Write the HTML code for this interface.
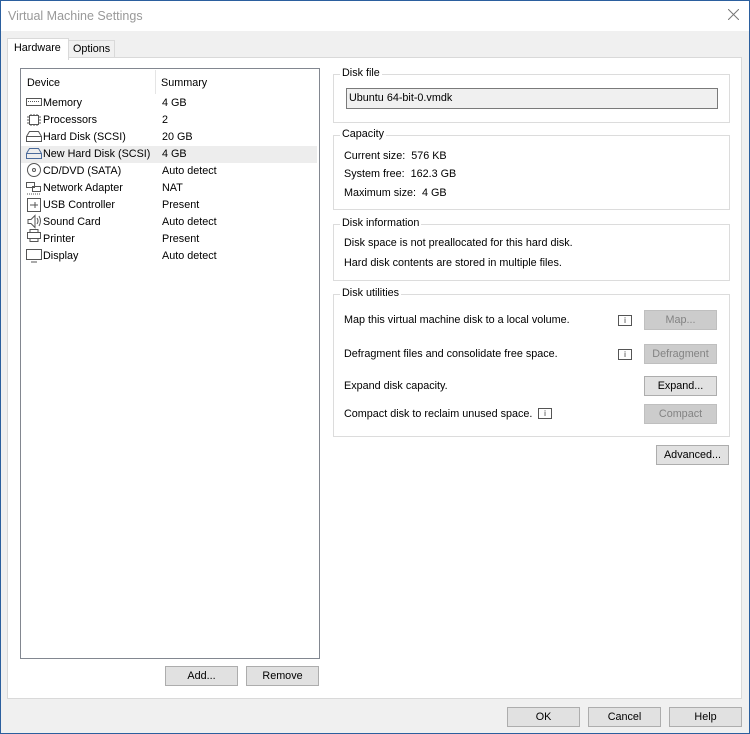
<!DOCTYPE html>
<html><head><style>
body{margin:0;width:750px;height:734px;overflow:hidden;font-family:"Liberation Sans",sans-serif;font-size:10.8px;color:#000;}
.win{position:absolute;left:0;top:0;width:748px;height:732px;border:1px solid #2b5f9e;background:#f0f0f0;}
.title{position:absolute;left:0;top:0;width:748px;height:30px;background:#fff;}
.a{position:absolute;white-space:nowrap;}
.btn{position:absolute;border:1px solid #adadad;background:#e1e1e1;text-align:center;line-height:18px;height:18px;box-sizing:content-box;}
.dis{color:#838383;border-color:#bfbfbf;background:#cccccc;}
.grp{position:absolute;border:1px solid #dcdcdc;}
.lg{position:absolute;top:-8px;left:6px;background:#fff;padding:0 2px;}
.info{position:absolute;width:12px;height:9px;border:1px solid #555;font-size:8px;line-height:9px;text-align:center;color:#333;}
</style></head><body>
<div class="win">
<div class="title"><span class="a" style="left:7px;top:8px;font-size:12.5px;color:#999">Virtual Machine Settings</span>
<svg class="a" style="left:727px;top:8px" width="11" height="11" stroke="#777" stroke-width="1"><path d="M0 0L11 11M11 0L0 11"/></svg></div>
<div class="a" style="left:66px;top:39px;width:46px;height:18px;border:1px solid #d9d9d9;border-bottom:none;background:#f0f0f0"></div>
<span class="a" style="left:72px;top:42px">Options</span>
<div class="a" style="left:6px;top:56px;width:733px;height:640px;border:1px solid #d9d9d9;background:#fff"></div>
<div class="a" style="left:6px;top:37px;width:60px;height:21px;border:1px solid #d9d9d9;border-bottom:none;background:#fff"></div>
<span class="a" style="left:13px;top:41px">Hardware</span>
<div class="a" style="left:19px;top:67px;width:298px;height:589px;border:1px solid #828790;background:#fff"></div>
<div class="a" style="left:154px;top:69px;width:1px;height:24px;background:#e5e5e5"></div>
<span class="a" style="left:26px;top:76px">Device</span><span class="a" style="left:160px;top:76px">Summary</span>
<div class="a" style="left:20px;top:145px;width:296px;height:17px;background:#ededed"></div>
<div class="grp" style="left:332px;top:73px;width:395px;height:47px"><span class="lg">Disk file</span>
<div class="a" style="left:12px;top:13px;width:368px;height:19px;border:1px solid #7a7a7a;background:#f0f0f0;line-height:19px;padding-left:2px">Ubuntu 64-bit-0.vmdk</div></div>
<div class="grp" style="left:332px;top:134px;width:395px;height:73px"><span class="lg">Capacity</span>
<span class="a" style="left:10px;top:14px">Current size:&nbsp; 576 KB</span>
<span class="a" style="left:10px;top:32px">System free:&nbsp; 162.3 GB</span>
<span class="a" style="left:10px;top:51px">Maximum size:&nbsp; 4 GB</span></div>
<div class="grp" style="left:332px;top:223px;width:395px;height:55px"><span class="lg">Disk information</span>
<span class="a" style="left:10px;top:12px">Disk space is not preallocated for this hard disk.</span>
<span class="a" style="left:10px;top:32px">Hard disk contents are stored in multiple files.</span></div>
<div class="grp" style="left:332px;top:293px;width:395px;height:141px"><span class="lg">Disk utilities</span>
<span class="a" style="left:10px;top:19px">Map this virtual machine disk to a local volume.</span>
<span class="a" style="left:10px;top:53px">Defragment files and consolidate free space.</span>
<span class="a" style="left:10px;top:85px">Expand disk capacity.</span>
<span class="a" style="left:10px;top:113px">Compact disk to reclaim unused space.</span>
<div class="info" style="left:284px;top:20px">i</div>
<div class="info" style="left:284px;top:54px">i</div>
<div class="info" style="left:204px;top:113px">i</div>
<div class="btn dis" style="left:310px;top:15px;width:71px">Map...</div>
<div class="btn dis" style="left:310px;top:49px;width:71px">Defragment</div>
<div class="btn" style="left:310px;top:81px;width:71px">Expand...</div>
<div class="btn dis" style="left:310px;top:109px;width:71px">Compact</div>
</div>
<div class="btn" style="left:655px;top:444px;width:71px">Advanced...</div>
<div class="btn" style="left:164px;top:665px;width:71px">Add...</div>
<div class="btn" style="left:245px;top:665px;width:71px">Remove</div>
<div class="btn" style="left:506px;top:706px;width:71px">OK</div>
<div class="btn" style="left:587px;top:706px;width:71px">Cancel</div>
<div class="btn" style="left:668px;top:706px;width:71px">Help</div>
</div>
<div style="position:absolute;left:0;top:2px">
<span class="a" style="left:43px;top:95px">Memory</span><span class="a" style="left:162px;top:95px">4 GB</span>
<span class="a" style="left:43px;top:112px">Processors</span><span class="a" style="left:162px;top:112px">2</span>
<span class="a" style="left:43px;top:129px">Hard Disk (SCSI)</span><span class="a" style="left:162px;top:129px">20 GB</span>
<span class="a" style="left:43px;top:146px">New Hard Disk (SCSI)</span><span class="a" style="left:162px;top:146px">4 GB</span>
<span class="a" style="left:43px;top:163px">CD/DVD (SATA)</span><span class="a" style="left:162px;top:163px">Auto detect</span>
<span class="a" style="left:43px;top:180px">Network Adapter</span><span class="a" style="left:162px;top:180px">NAT</span>
<span class="a" style="left:43px;top:197px">USB Controller</span><span class="a" style="left:162px;top:197px">Present</span>
<span class="a" style="left:43px;top:214px">Sound Card</span><span class="a" style="left:162px;top:214px">Auto detect</span>
<span class="a" style="left:43px;top:231px">Printer</span><span class="a" style="left:162px;top:231px">Present</span>
<span class="a" style="left:43px;top:248px">Display</span><span class="a" style="left:162px;top:248px">Auto detect</span>
<svg class="a" style="left:26px;top:95px" width="16" height="170" fill="none" stroke="#555" stroke-width="1">
<rect x="0.5" y="1.5" width="15" height="7"/><line x1="2" y1="4.5" x2="14" y2="4.5" stroke-dasharray="1 1"/>
<rect x="3.5" y="18.5" width="9" height="9"/><path d="M1 20h2M1 23h2M1 26h2M13 20h2M13 23h2M13 26h2M5 17v1M8 17v1M11 17v1M5 28v1M8 28v1M11 28v1"/>
<path d="M0.5 44.5h15v-5l-3-5h-9l-3 5z M0.5 39.5h15"/>
<path d="M0.5 61.5h15v-5l-3-5h-9l-3 5z M0.5 56.5h15" stroke="#4a6a9a"/>
<circle cx="8" cy="73" r="6.5"/><circle cx="8" cy="73" r="1.5"/>
<rect x="0.5" y="85.5" width="8" height="5"/><rect x="6.5" y="89.5" width="8" height="5"/><path d="M1 97h14" stroke-dasharray="1 1"/>
<rect x="1.5" y="101.5" width="13" height="13"/><path d="M4 108h8M9 105v6"/>
<path d="M2 122.5h3l4-4v12l-4-4h-3z M11 121q2 3 0 6 M13 119q3 5 0 10"/>
<path d="M4 135.5v-3h8v3 M1.5 135.5h13v6h-13z M4 141.5v3h8v-3"/>
<rect x="0.5" y="152.5" width="15" height="10"/><path d="M5 165h6"/>
</svg>
</div>
</body></html>
